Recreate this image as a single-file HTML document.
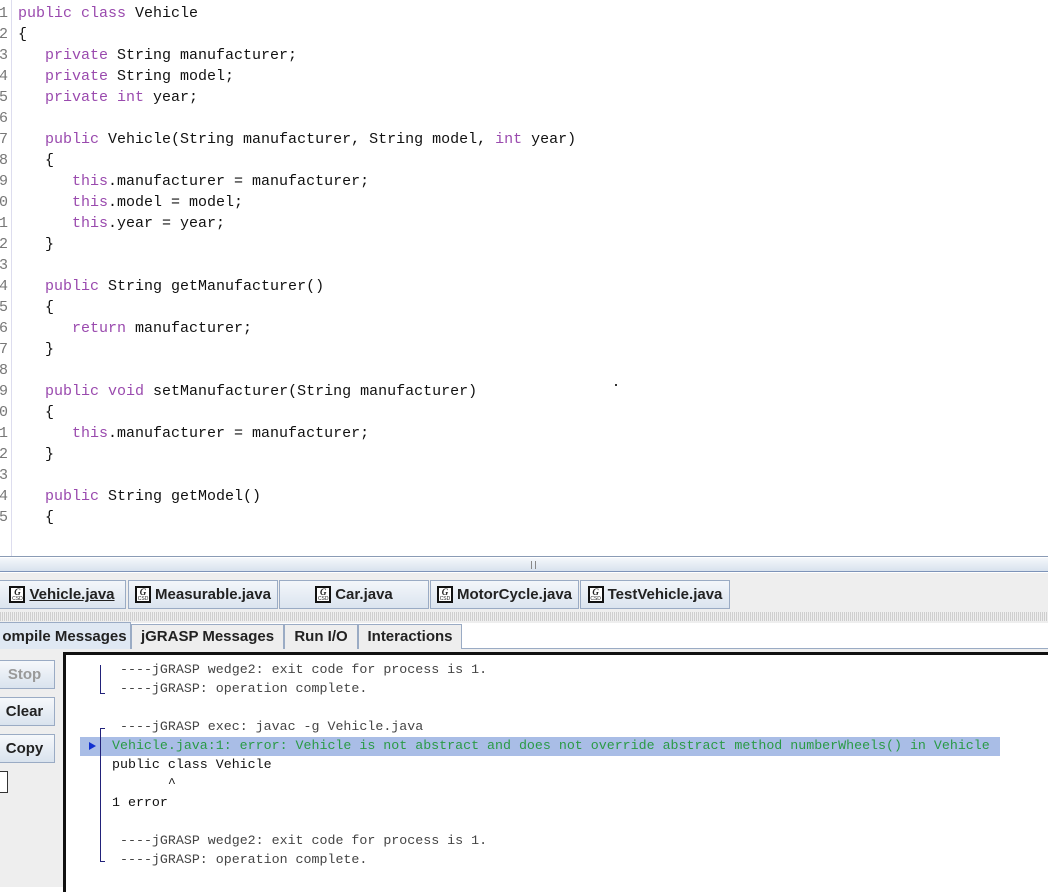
<!DOCTYPE html>
<html><head><style>
*{margin:0;padding:0;box-sizing:border-box}
body{width:1048px;height:887px;overflow:hidden;background:#fff;position:relative;font-family:"Liberation Sans",sans-serif}
.ed{position:absolute;left:0;top:0;width:1048px;height:557px;background:#fff;border-bottom:1px solid #8a9bb5;overflow:hidden}
.gut{position:absolute;left:11px;top:0;width:1px;height:557px;background:#dde}
.ln{position:absolute;left:-10px;width:18px;text-align:right;font:15px "Liberation Mono",monospace;color:#777}
.cl{position:absolute;left:18px;font:15px "Liberation Mono",monospace;color:#111;white-space:pre}
.k{color:#9a4aae}
.split{position:absolute;left:0;top:558px;width:1048px;height:14px;background:linear-gradient(#f4f7fb,#d8e2ee);border-bottom:1px solid #7d93b8}
.tbar{position:absolute;left:0;top:573px;width:1048px;height:50px;background:#eeeeee}
.ft{position:absolute;top:580px;height:29px;background:linear-gradient(#f3f6fa,#dbe4ef);border:1px solid #9aabc4;font:bold 15px "Liberation Sans",sans-serif;color:#222;display:flex;align-items:center;justify-content:center;gap:4px}
.ic{width:16px;height:17px;border:2px solid #111;background:#fff;font:italic bold 9px "Liberation Serif",serif;line-height:8px;text-align:center;display:inline-block}
.ic small{display:block;font:5px "Liberation Sans",sans-serif;font-style:normal}
.dots{position:absolute;left:0;top:612px;width:1048px;height:9px;background:repeating-linear-gradient(90deg,#c6c6c6 0 1px,#eee 1px 2px);opacity:.8}
.bt{position:absolute;top:624px;height:25px;border:1px solid #9aabc4;border-bottom:none;background:#eeeeee;font:bold 15px "Liberation Sans",sans-serif;color:#222;padding-top:3px;text-align:center}
.pan{position:absolute;left:0;top:648px;width:1048px;height:239px;background:#eeeeee;border-top:1px solid #9aabc4}
.btn{position:absolute;left:-6px;width:61px;height:29px;border:1px solid #9aabc4;background:linear-gradient(#f6f8fb,#d9e3ee);font:bold 15px "Liberation Sans",sans-serif;text-align:center;padding-top:5px;color:#222}
.out{position:absolute;left:63px;top:652px;width:990px;height:240px;border:3px solid #111;border-right:none;border-bottom:none;background:#fff}
.ol{position:absolute;font:13.3px "Liberation Mono",monospace;white-space:pre;color:#444}
.g{color:#2a9a45}
.br{position:absolute;border-left:1px solid #22227a;width:5px}
</style></head><body>
<div class="ed">
<div class="gut"></div>
<div class="ln" style="top:5px">1</div><div class="cl" style="top:5px"><span class="k">public class</span> Vehicle</div>
<div class="ln" style="top:26px">2</div><div class="cl" style="top:26px">{</div>
<div class="ln" style="top:47px">3</div><div class="cl" style="top:47px">   <span class="k">private</span> String manufacturer;</div>
<div class="ln" style="top:68px">4</div><div class="cl" style="top:68px">   <span class="k">private</span> String model;</div>
<div class="ln" style="top:89px">5</div><div class="cl" style="top:89px">   <span class="k">private int</span> year;</div>
<div class="ln" style="top:110px">6</div>
<div class="ln" style="top:131px">7</div><div class="cl" style="top:131px">   <span class="k">public</span> Vehicle(String manufacturer, String model, <span class="k">int</span> year)</div>
<div class="ln" style="top:152px">8</div><div class="cl" style="top:152px">   {</div>
<div class="ln" style="top:173px">9</div><div class="cl" style="top:173px">      <span class="k">this</span>.manufacturer = manufacturer;</div>
<div class="ln" style="top:194px">10</div><div class="cl" style="top:194px">      <span class="k">this</span>.model = model;</div>
<div class="ln" style="top:215px">11</div><div class="cl" style="top:215px">      <span class="k">this</span>.year = year;</div>
<div class="ln" style="top:236px">12</div><div class="cl" style="top:236px">   }</div>
<div class="ln" style="top:257px">13</div>
<div class="ln" style="top:278px">14</div><div class="cl" style="top:278px">   <span class="k">public</span> String getManufacturer()</div>
<div class="ln" style="top:299px">15</div><div class="cl" style="top:299px">   {</div>
<div class="ln" style="top:320px">16</div><div class="cl" style="top:320px">      <span class="k">return</span> manufacturer;</div>
<div class="ln" style="top:341px">17</div><div class="cl" style="top:341px">   }</div>
<div class="ln" style="top:362px">18</div>
<div class="ln" style="top:383px">19</div><div class="cl" style="top:383px">   <span class="k">public void</span> setManufacturer(String manufacturer)</div>
<div class="ln" style="top:404px">20</div><div class="cl" style="top:404px">   {</div>
<div class="ln" style="top:425px">21</div><div class="cl" style="top:425px">      <span class="k">this</span>.manufacturer = manufacturer;</div>
<div class="ln" style="top:446px">22</div><div class="cl" style="top:446px">   }</div>
<div class="ln" style="top:467px">23</div>
<div class="ln" style="top:488px">24</div><div class="cl" style="top:488px">   <span class="k">public</span> String getModel()</div>
<div class="ln" style="top:509px">25</div><div class="cl" style="top:509px">   {</div>
</div>
<div class="split"><div style="position:absolute;left:531px;top:3px;width:5px;height:8px;border-left:1px solid #888;border-right:1px solid #888"></div></div>
<div class="tbar"></div>
<div class="ft" style="left:-2px;width:128px"><span class="ic">G<small>CSD</small></span><span style="text-decoration:underline">Vehicle.java</span></div>
<div class="ft" style="left:128px;width:150px"><span class="ic">G<small>CSD</small></span>Measurable.java</div>
<div class="ft" style="left:279px;width:150px"><span class="ic">G<small>CSD</small></span>Car.java</div>
<div class="ft" style="left:430px;width:149px"><span class="ic">G<small>CSD</small></span>MotorCycle.java</div>
<div class="ft" style="left:580px;width:150px"><span class="ic">G<small>CSD</small></span>TestVehicle.java</div>
<div class="dots"></div>
<div class="pan">
<div class="btn" style="top:11px;color:#999">Stop</div>
<div class="btn" style="top:48px">Clear</div>
<div class="btn" style="top:85px">Copy</div>
<div style="position:absolute;left:-4px;top:122px;width:12px;height:22px;border:1px solid #333;background:#fff"></div>
</div>
<div class="bt" style="left:-2px;width:133px;top:622px;height:27px;background:#dfe8f3;padding-top:5px">ompile Messages</div>
<div class="bt" style="left:131px;width:153px">jGRASP Messages</div>
<div class="bt" style="left:284px;width:74px">Run I/O</div>
<div class="bt" style="left:358px;width:104px">Interactions</div>
<div class="out">
<div class="br" style="left:34px;top:10px;height:29px;border-bottom:1px solid #22227a"></div>
<div class="ol" style="left:54px;top:7px">----jGRASP wedge2: exit code for process is 1.</div>
<div class="ol" style="left:54px;top:26px">----jGRASP: operation complete.</div>
<div style="position:absolute;left:14px;top:82px;width:920px;height:19px;background:#a9bde6"></div>
<div style="position:absolute;left:23px;top:87px;width:0;height:0;border-top:4px solid transparent;border-bottom:4px solid transparent;border-left:7px solid #1030d0"></div>
<div class="br" style="left:34px;top:73px;height:134px;border-top:1px solid #22227a;border-bottom:1px solid #22227a"></div>
<div class="ol" style="left:54px;top:64px">----jGRASP exec: javac -g Vehicle.java</div>
<div class="ol g" style="left:46px;top:83px">Vehicle.java:1: error: Vehicle is not abstract and does not override abstract method numberWheels() in Vehicle</div>
<div class="ol" style="left:46px;top:102px;color:#111">public class Vehicle</div>
<div class="ol" style="left:46px;top:121px;color:#111">       ^</div>
<div class="ol" style="left:46px;top:140px;color:#111">1 error</div>
<div class="ol" style="left:54px;top:178px">----jGRASP wedge2: exit code for process is 1.</div>
<div class="ol" style="left:54px;top:197px">----jGRASP: operation complete.</div>
</div>
<div style="position:absolute;left:615px;top:384px;width:2px;height:2px;background:#333"></div>
</body></html>
